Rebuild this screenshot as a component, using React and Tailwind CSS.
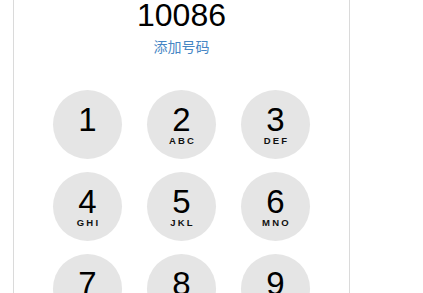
import React from 'react'

const keys = [
  { n: '1', l: '' },
  { n: '2', l: 'ABC' },
  { n: '3', l: 'DEF' },
  { n: '4', l: 'GHI' },
  { n: '5', l: 'JKL' },
  { n: '6', l: 'MNO' },
  { n: '7', l: 'PQRS' },
  { n: '8', l: 'TUV' },
  { n: '9', l: 'WXYZ' },
]

const Key = ({ n, l }) => (
  <div className="h-[69px] w-[69px] rounded-full bg-[#e5e5e5] flex flex-col items-center pt-[16px]">
    <span className="text-[33px] leading-[28px] text-black">{n}</span>
    {l && <span className="mt-[2px] pl-[2px] text-[9.5px] leading-[10px] font-bold tracking-[2.2px] text-[#111]">{l}</span>}
  </div>
)

export default function App() {
  return (
    <div className="h-[293px] w-[423px] overflow-hidden bg-white" style={{ fontFamily: '"Liberation Sans", "Noto Sans CJK SC", sans-serif' }}>
      <div className="ml-[13px] h-full w-[337px] border-x border-[#dadada] flex flex-col items-center">
        <div className="mt-[2px] text-[32px] leading-[26px] text-black">10086</div>
        <div className="mt-[10px] text-[14px] leading-[16px] text-[#4686c4]" style={{ fontFamily: '"Noto Sans CJK SC", sans-serif' }}>添加号码</div>
        <div className="mt-[36px] grid grid-cols-3 gap-x-[25px] gap-y-[13px]">
          {keys.map((k) => (
            <Key key={k.n} n={k.n} l={k.l} />
          ))}
        </div>
      </div>
    </div>
  )
}
